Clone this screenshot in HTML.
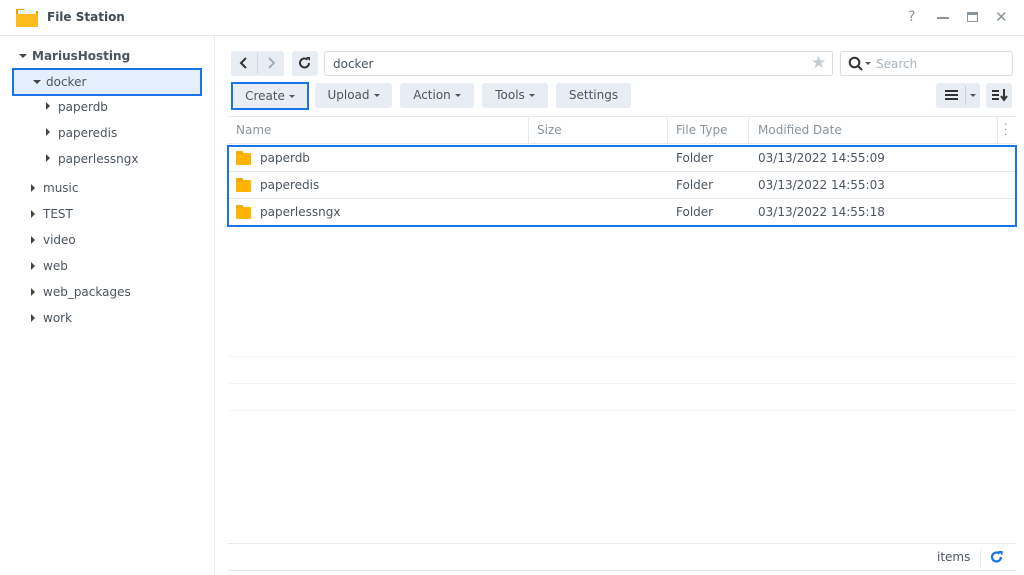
<!DOCTYPE html><html><head><style>
*{box-sizing:border-box;margin:0;padding:0}
body{width:1024px;height:575px;background:#fff;font-family:"DejaVu Sans",sans-serif;font-size:12px;color:#4b555f;position:relative;overflow:hidden}
.a{position:absolute}
.btn{position:absolute;background:#e8edf3;border-radius:3px;height:25px;line-height:25px;text-align:center;color:#4b555f}
.car{display:inline-block;border-left:3px solid transparent;border-right:3px solid transparent;border-top:3px solid #555;vertical-align:middle;margin-left:4px}
.tri{position:absolute;width:0;height:0}
.td{border-left:4px solid transparent;border-right:4px solid transparent;border-top:4px solid #444}
.tr{border-top:4px solid transparent;border-bottom:4px solid transparent;border-left:4px solid #444}
.line{position:absolute;height:1px;background:#e6e9ed}
.fl{position:absolute;height:1px;background:#f3f4f6;left:228px;width:788px}
.fold{position:absolute;width:15px;height:12px;background:#ffb400;border-radius:1px}
.fold:before{content:"";position:absolute;left:0;top:-2px;width:7px;height:3px;background:#f5a800;border-radius:1px 1px 0 0}
</style></head><body>
<svg class="a" style="left:15px;top:6px" width="24" height="22" viewBox="0 0 24 22"><path d="M1 3h8l2 2h12v16H1z" fill="#f59e00"/><rect x="3" y="4" width="18" height="6" fill="#e8f4f0"/><rect x="1" y="8" width="22" height="13" rx="1" fill="#ffbc1c"/></svg>
<div class="a" style="left:47px;top:10px;font-weight:bold;color:#414b55">File Station</div>
<div class="a" style="left:908px;top:9px;color:#8a949c;font-size:14px">?</div>
<div class="a" style="left:937px;top:17px;width:12px;height:2px;background:#8a949c"></div>
<div class="a" style="left:967px;top:12px;width:11px;height:10px;border:1.5px solid #8a949c;border-top-width:3px"></div>
<div class="a" style="left:995px;top:8px;color:#8a949c;font-size:15px">✕</div>
<div class="line" style="left:0;top:35px;width:1024px"></div>
<div class="a" style="left:214px;top:36px;width:1px;height:539px;background:#e6e9ed"></div>
<div class="tri td" style="left:19px;top:54px"></div>
<div class="a" style="left:32px;top:49px;font-weight:bold">MariusHosting</div>
<div class="a" style="left:12px;top:68px;width:190px;height:28px;background:#e3effc;border:2px solid #1a73e8"></div>
<div class="tri td" style="left:33px;top:80px"></div>
<div class="a" style="left:46px;top:75px">docker</div>
<div class="tri tr" style="left:46px;top:102px"></div><div class="a" style="left:58px;top:100px">paperdb</div>
<div class="tri tr" style="left:46px;top:128px"></div><div class="a" style="left:58px;top:126px">paperedis</div>
<div class="tri tr" style="left:46px;top:154px"></div><div class="a" style="left:58px;top:152px">paperlessngx</div>
<div class="tri tr" style="left:31px;top:184px"></div><div class="a" style="left:43px;top:181px">music</div>
<div class="tri tr" style="left:31px;top:210px"></div><div class="a" style="left:43px;top:207px">TEST</div>
<div class="tri tr" style="left:31px;top:236px"></div><div class="a" style="left:43px;top:233px">video</div>
<div class="tri tr" style="left:31px;top:262px"></div><div class="a" style="left:43px;top:259px">web</div>
<div class="tri tr" style="left:31px;top:288px"></div><div class="a" style="left:43px;top:285px">web_packages</div>
<div class="tri tr" style="left:31px;top:314px"></div><div class="a" style="left:43px;top:311px">work</div>
<div class="btn" style="left:231px;top:51px;width:53px"></div>
<div class="a" style="left:257px;top:53px;width:1px;height:21px;background:#d0d6dc"></div>
<svg class="a" style="left:238px;top:56px" width="12" height="14"><path d="M8 2L3 7l5 5" stroke="#333" stroke-width="2" fill="none"/></svg>
<svg class="a" style="left:265px;top:56px" width="12" height="14"><path d="M4 2l5 5-5 5" stroke="#aab" stroke-width="2" fill="none"/></svg>
<div class="btn" style="left:292px;top:51px;width:26px"></div>
<svg class="a" style="left:298px;top:56px" width="14" height="14"><path d="M11 7a4.5 4.5 0 1 1-1.5-3.4" stroke="#333" stroke-width="2" fill="none"/><path d="M8 1h4v4z" fill="#333"/></svg>
<div class="a" style="left:324px;top:51px;width:509px;height:25px;border:1px solid #d7dde3;border-radius:3px"></div>
<div class="a" style="left:333px;top:57px">docker</div>
<div class="a" style="left:811px;top:53px;color:#c5ccd3;font-size:17px">★</div>
<div class="a" style="left:840px;top:51px;width:173px;height:25px;border:1px solid #d7dde3;border-radius:3px"></div>
<svg class="a" style="left:848px;top:56px" width="16" height="16"><circle cx="6.5" cy="6.5" r="4.8" stroke="#333" stroke-width="2" fill="none"/><path d="M10 10l4 4" stroke="#333" stroke-width="2"/></svg>
<span class="car a" style="left:861px;top:62px"></span>
<div class="a" style="left:876px;top:57px;color:#aab3bb">Search</div>
<div class="a" style="left:231px;top:82px;width:78px;height:28px;border:2px solid #1a73e8"></div>
<div class="btn" style="left:233px;top:84px;width:74px;height:24px;line-height:24px">Create<span class="car"></span></div>
<div class="btn" style="left:315px;top:83px;width:77px">Upload<span class="car"></span></div>
<div class="btn" style="left:400px;top:83px;width:74px">Action<span class="car"></span></div>
<div class="btn" style="left:482px;top:83px;width:66px">Tools<span class="car"></span></div>
<div class="btn" style="left:556px;top:83px;width:75px">Settings</div>
<div class="btn" style="left:936px;top:83px;width:44px"></div>
<div class="a" style="left:965px;top:86px;width:1px;height:19px;background:#c8cfd6"></div>
<div class="a" style="left:945px;top:90px;width:13px;height:2px;background:#333;box-shadow:0 4px 0 #333,0 8px 0 #333"></div>
<span class="car a" style="left:966px;top:94px"></span>
<div class="btn" style="left:986px;top:83px;width:26px"></div>
<div class="a" style="left:992px;top:90px;width:7px;height:2px;background:#333;box-shadow:0 4px 0 #333,0 8px 0 #333"></div>
<svg class="a" style="left:1000px;top:88px" width="8" height="14"><path d="M4 1v10M1 8l3 4 3-4" stroke="#333" stroke-width="2" fill="none"/></svg>
<div class="line" style="left:228px;top:116px;width:788px"></div>
<div class="line" style="left:228px;top:143px;width:788px"></div>
<div class="a" style="left:528px;top:117px;width:1px;height:26px;background:#e6e9ed"></div>
<div class="a" style="left:667px;top:117px;width:1px;height:26px;background:#e6e9ed"></div>
<div class="a" style="left:748px;top:117px;width:1px;height:26px;background:#e6e9ed"></div>
<div class="a" style="left:997px;top:117px;width:1px;height:26px;background:#e6e9ed"></div>
<div class="a" style="left:236px;top:123px;color:#8a949c">Name</div>
<div class="a" style="left:537px;top:123px;color:#8a949c">Size</div>
<div class="a" style="left:676px;top:123px;color:#8a949c">File Type</div>
<div class="a" style="left:758px;top:123px;color:#8a949c">Modified Date</div>
<div class="a" style="left:1004px;top:122px;color:#8a949c;font-size:11px;line-height:5px">·<br>·<br>·</div>
<div class="a" style="left:227px;top:145px;width:790px;height:82px;border:2px solid #1a73e8"></div>
<div class="line" style="left:229px;top:171px;width:786px"></div>
<div class="line" style="left:229px;top:198px;width:786px"></div>
<div class="fold" style="left:236px;top:153px"></div><div class="a" style="left:260px;top:151px">paperdb</div>
<div class="a" style="left:676px;top:151px">Folder</div><div class="a" style="left:758px;top:151px">03/13/2022 14:55:09</div>
<div class="fold" style="left:236px;top:180px"></div><div class="a" style="left:260px;top:178px">paperedis</div>
<div class="a" style="left:676px;top:178px">Folder</div><div class="a" style="left:758px;top:178px">03/13/2022 14:55:03</div>
<div class="fold" style="left:236px;top:207px"></div><div class="a" style="left:260px;top:205px">paperlessngx</div>
<div class="a" style="left:676px;top:205px">Folder</div><div class="a" style="left:758px;top:205px">03/13/2022 14:55:18</div>
<div class="fl" style="top:356px"></div><div class="fl" style="top:383px"></div><div class="fl" style="top:410px"></div>
<div class="line" style="left:228px;top:543px;width:788px"></div>
<div class="line" style="left:228px;top:570px;width:788px"></div>
<div class="a" style="left:937px;top:550px">items</div>
<div class="a" style="left:980px;top:549px;width:1px;height:18px;background:#e6e9ed"></div>
<svg class="a" style="left:990px;top:550px" width="14" height="14"><path d="M11 7a4.5 4.5 0 1 1-1.5-3.4" stroke="#1a73e8" stroke-width="2.2" fill="none"/><path d="M8 1h4.5v4.5z" fill="#1a73e8"/></svg>
</body></html>
